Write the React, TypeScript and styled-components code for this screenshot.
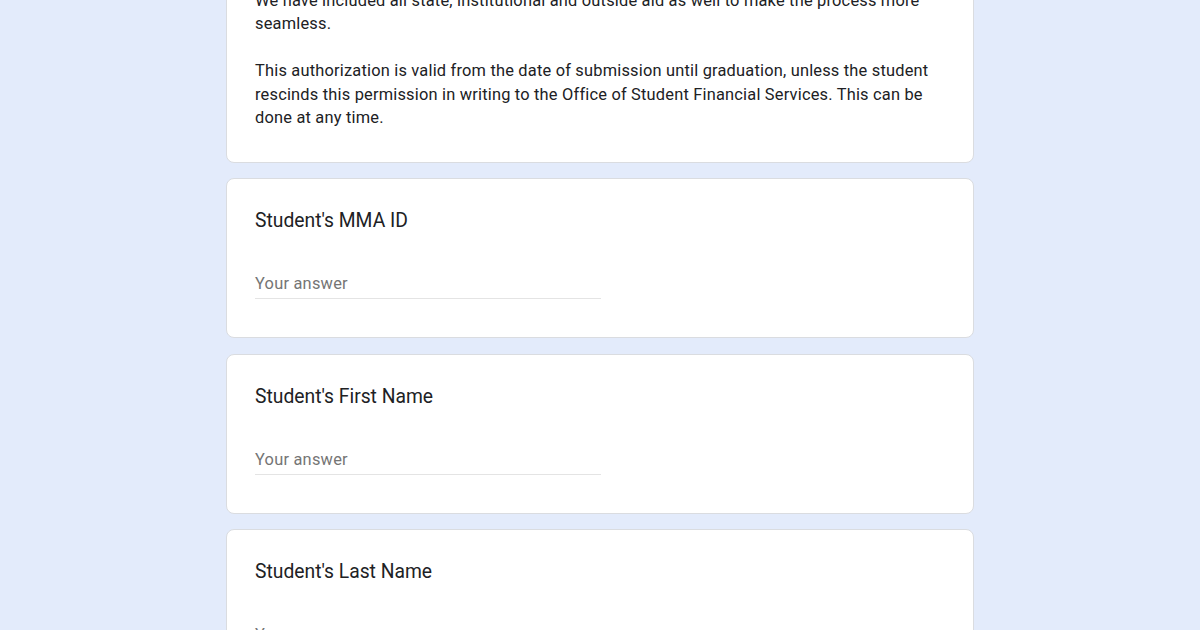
import React from 'react';
import styled, { createGlobalStyle } from 'styled-components';

const GlobalStyle = createGlobalStyle`
  html, body {
    margin: 0;
    padding: 0;
    background: #e3ebfb;
  }
  body {
    font-family: Roboto, "Liberation Sans", Arial, sans-serif;
    color: #202124;
    overflow: hidden;
  }
`;

const Page = styled.div`
  display: flex;
  flex-direction: column;
  align-items: center;
  gap: 15.5px;
  margin-top: -40px;
  padding-bottom: 40px;
`;

const Card = styled.div`
  box-sizing: border-box;
  width: 748px;
  background: #fff;
  border: 1px solid #dadce0;
  border-radius: 8px;
  padding: 28px 28px ${(props: { $bottom?: number }) => props.$bottom ?? 28}px;
`;

const Description = styled.div`
  font-size: 16.4px;
  line-height: 23.4px;
  letter-spacing: 0.2px;
  white-space: pre-wrap;
  color: #202124;
`;

const Title = styled.div`
  font-size: 19.3px;
  line-height: 28px;
  letter-spacing: 0;
  color: #202124;
`;

const AnswerField = styled.div`
  box-sizing: border-box;
  width: 346px;
  height: 36px;
  margin-top: 28px;
  padding-top: 10px;
  border-bottom: 1px solid #e4e4e4;
  font-size: 16.4px;
  line-height: 22px;
  letter-spacing: 0.23px;
  color: #757575;
`;

const descriptionText =
  'We have included all state, institutional and outside aid as well to make the process more seamless.\n\n' +
  'This authorization is valid from the date of submission until graduation, unless the student rescinds this permission in writing to the Office of Student Financial Services. This can be done at any time.';

const Question: React.FC<{ title: string }> = ({ title }) => (
  <Card $bottom={38}>
    <Title>{title}</Title>
    <AnswerField>Your answer</AnswerField>
  </Card>
);

export default function App() {
  return (
    <>
      <GlobalStyle />
      <Page>
        <Card $bottom={32.5}>
          <Description>{descriptionText}</Description>
        </Card>
        <Question title="Student's MMA ID" />
        <Question title="Student's First Name" />
        <Question title="Student's Last Name" />
      </Page>
    </>
  );
}
